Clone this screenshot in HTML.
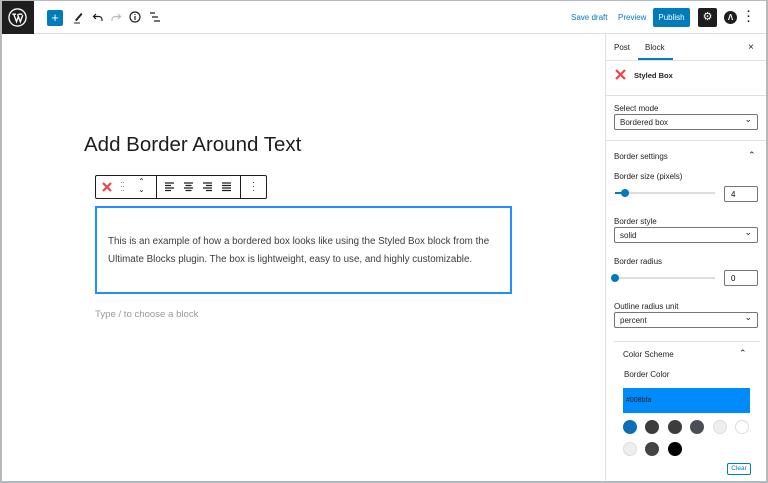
<!DOCTYPE html>
<html><head><style>
*{box-sizing:border-box;margin:0;padding:0}
body{width:768px;height:483px;overflow:hidden;font-family:"Liberation Sans",sans-serif;background:#fff;position:relative}
.frame{position:absolute;left:0;top:0;width:768px;height:483px;border:2px solid #b4b9be;border-top-width:1px}
.a{position:absolute}
.t{position:absolute;font-size:8px;color:#1e1e1e;white-space:nowrap}
.sel{position:absolute;left:614px;width:144px;height:16px;border:1px solid #757575;border-radius:2px;font-size:8px;padding:3px 5px;color:#1e1e1e}
.sel:after{content:"⌄";position:absolute;right:5px;top:-1px;font-size:9px}
.num{position:absolute;left:724px;width:34px;height:16px;border:1px solid #757575;border-radius:2px;font-size:8px;padding:3px 6px}
.track{position:absolute;left:615px;width:100px;height:2px;background:#ddd}
.dot{position:absolute;width:14px;height:14px;border-radius:50%}
</style></head><body>
<div class="a" style="left:0;top:0;width:768px;height:34px;border-bottom:1px solid #e0e0e0"></div>
<div class="a" style="left:1px;top:1px;width:33px;height:33px;background:#1e1e1e"></div>
<svg class="a" style="left:8px;top:8px" width="19" height="19" viewBox="0 0 20 20"><circle cx="10" cy="10" r="9" fill="none" stroke="#fff" stroke-width="1.4"/><path d="M4.5 6.5h4M11 6.5h4M6 6.5l3 8 2-6M10 6.5l3 8 2.5-7" fill="none" stroke="#fff" stroke-width="1.4"/></svg>
<div class="a" style="left:47px;top:10px;width:16px;height:16px;background:#007cba;border-radius:2px;color:#fff;font-size:13px;line-height:16px;text-align:center">+</div>
<svg class="a" style="left:72px;top:11px" width="12" height="13" viewBox="0 0 12 13"><path d="M3 9l6-7 1.5 1.2-6 7z" fill="#1e1e1e"/><path d="M2 12h6" stroke="#1e1e1e"/></svg>
<svg class="a" style="left:92px;top:12px" width="11" height="10" viewBox="0 0 11 10"><path d="M4 2L1.5 4.5 4 7M1.5 4.5H7a3 3 0 0 1 3 3V9" fill="none" stroke="#1e1e1e" stroke-width="1.2"/></svg>
<svg class="a" style="left:111px;top:12px" width="11" height="10" viewBox="0 0 11 10"><path d="M7 2l2.5 2.5L7 7M9.5 4.5H4a3 3 0 0 0-3 3V9" fill="none" stroke="#bbb" stroke-width="1.2"/></svg>
<svg class="a" style="left:129px;top:11px" width="12" height="12" viewBox="0 0 12 12"><circle cx="6" cy="6" r="5" fill="none" stroke="#1e1e1e" stroke-width="1.2"/><path d="M6 5v4M6 3v1" stroke="#1e1e1e" stroke-width="1.2"/></svg>
<svg class="a" style="left:149px;top:12px" width="12" height="10" viewBox="0 0 12 10"><path d="M1 1h5M3 5h6M5 9h6" stroke="#1e1e1e" stroke-width="1.2"/></svg>
<div class="t" style="left:571px;top:13px;color:#007cba">Save draft</div>
<div class="t" style="left:618px;top:13px;color:#007cba">Preview</div>
<div class="a" style="left:653px;top:8px;width:37px;height:19px;background:#007cba;border-radius:2px;color:#fff;font-size:8px;line-height:19px;text-align:center">Publish</div>
<div class="a" style="left:698px;top:8px;width:19px;height:19px;background:#1e1e1e;border-radius:2px;color:#fff;font-size:11px;line-height:19px;text-align:center">⚙</div>
<div class="a" style="left:724px;top:11px;width:13px;height:13px;background:#1e1e1e;border-radius:50%;color:#fff;font-size:8px;line-height:13px;text-align:center;font-weight:bold">Λ</div>
<div class="t" style="left:747px;top:10px;font-size:11px;font-weight:bold;line-height:5px">·<br>·<br>·</div>
<div class="a" style="left:605px;top:34px;width:1px;height:449px;background:#e0e0e0"></div>
<div class="t" style="left:614px;top:43px">Post</div>
<div class="t" style="left:645px;top:43px">Block</div>
<div class="a" style="left:638px;top:58px;width:35px;height:2px;background:#007cba"></div>
<div class="t" style="left:748px;top:42px;font-size:10px">×</div>
<div class="a" style="left:606px;top:60px;width:162px;height:1px;background:#e0e0e0"></div>
<svg class="a" style="left:615px;top:69px" width="11" height="11" viewBox="0 0 11 11"><path d="M1 1l9 9M10 1l-9 9" stroke="#e44" stroke-width="2.2"/></svg>
<div class="t" style="left:634px;top:71px;font-weight:bold;font-size:7.5px">Styled Box</div>
<div class="a" style="left:606px;top:95px;width:162px;height:1px;background:#e0e0e0"></div>
<div class="t" style="left:614px;top:104px">Select mode</div>
<div class="sel" style="top:114px">Bordered box</div>
<div class="a" style="left:606px;top:140px;width:162px;height:1px;background:#e0e0e0"></div>
<div class="t" style="left:614px;top:152px">Border settings</div>
<div class="t" style="left:748px;top:150px;font-size:9px">⌃</div>
<div class="t" style="left:614px;top:172px">Border size (pixels)</div>
<div class="track" style="top:192px"></div>
<div class="a" style="left:615px;top:192px;width:12px;height:2px;background:#007cba"></div>
<div class="dot" style="left:621px;top:189px;width:8px;height:8px;background:#007cba"></div>
<div class="num" style="top:186px">4</div>
<div class="t" style="left:614px;top:217px">Border style</div>
<div class="sel" style="top:227px">solid</div>
<div class="t" style="left:614px;top:257px">Border radius</div>
<div class="track" style="top:277px"></div>
<div class="dot" style="left:611px;top:274px;width:8px;height:8px;background:#007cba"></div>
<div class="num" style="top:270px">0</div>
<div class="t" style="left:614px;top:302px">Outline radius unit</div>
<div class="sel" style="top:312px">percent</div>
<div class="a" style="left:614px;top:341px;width:146px;height:1px;background:#e0e0e0"></div>
<div class="t" style="left:623px;top:350px">Color Scheme</div>
<div class="t" style="left:739px;top:348px;font-size:9px">⌃</div>
<div class="t" style="left:624px;top:370px">Border Color</div>
<div class="a" style="left:623px;top:388px;width:127px;height:25px;background:#008bfa"></div>
<div class="t" style="left:626px;top:397px;font-size:7px">#008bfa</div>
<div class="dot" style="left:623px;top:420px;background:#0f6cb6"></div>
<div class="dot" style="left:645px;top:420px;background:#3c3c3c"></div>
<div class="dot" style="left:668px;top:420px;background:#3c3c3c"></div>
<div class="dot" style="left:690px;top:420px;background:#4a4f57"></div>
<div class="dot" style="left:713px;top:420px;background:#eee;border:1px solid #ddd"></div>
<div class="dot" style="left:735px;top:420px;background:#fff;border:1px solid #ddd"></div>
<div class="dot" style="left:623px;top:442px;background:#eee;border:1px solid #ddd"></div>
<div class="dot" style="left:645px;top:442px;background:#444"></div>
<div class="dot" style="left:668px;top:442px;background:#000"></div>
<div class="a" style="left:727px;top:463px;width:24px;height:12px;border:1px solid #007cba;border-radius:2px;font-size:6.5px;color:#007cba;text-align:center;line-height:10px">Clear</div>
<div class="t" style="left:84px;top:133px;font-size:20.5px;color:#1e1e1e">Add Border Around Text</div>
<div class="a" style="left:95px;top:175px;width:172px;height:24px;border:1px solid #1e1e1e;border-radius:2px;background:#fff"></div>
<div class="a" style="left:156px;top:175px;width:1px;height:24px;background:#1e1e1e"></div>
<div class="a" style="left:240px;top:175px;width:1px;height:24px;background:#1e1e1e"></div>
<svg class="a" style="left:102px;top:182px" width="10" height="10" viewBox="0 0 10 10"><path d="M1 1l8 8M9 1l-8 8" stroke="#e44" stroke-width="2.2"/></svg>
<div class="t" style="left:120px;top:180px;font-size:9px;color:#888;letter-spacing:-1px;line-height:4px">··<br>··<br>··</div>
<div class="t" style="left:138px;top:178px;font-size:8px;line-height:8px">⌃<br>⌄</div>
<svg class="a" style="left:164px;top:182px" width="74" height="10" viewBox="0 0 74 10"><g stroke="#1e1e1e" stroke-width="1.2"><path d="M1 1h9M1 3.5h6M1 6h9M1 8.5h6"/><path d="M20 1h9M21.5 3.5h6M20 6h9M21.5 8.5h6"/><path d="M39 1h9M42 3.5h6M39 6h9M42 8.5h6"/><path d="M58 1h9M58 3.5h9M58 6h9M58 8.5h9"/></g></svg>
<div class="t" style="left:252px;top:180px;font-size:9px;line-height:4px;color:#1e1e1e">·<br>·<br>·</div>
<div class="a" style="left:95px;top:206px;width:417px;height:88px;border:2px solid #1e90ff"></div>
<div class="t" style="left:108px;top:233px;font-size:9.8px;color:#3c3c3c;line-height:18px">This is an example of how a bordered box looks like using the Styled Box block from the<br>Ultimate Blocks plugin. The box is lightweight, easy to use, and highly customizable.</div>
<div class="t" style="left:95px;top:309px;font-size:9.6px;color:#999">Type / to choose a block</div>
<div class="frame"></div>
</body></html>
